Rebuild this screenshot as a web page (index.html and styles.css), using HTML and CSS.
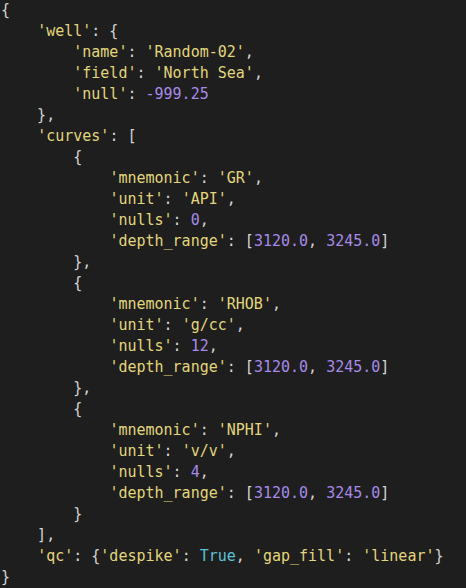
FILE: index.html
```html
<!DOCTYPE html>
<html>
<head>
<meta charset="utf-8">
<link rel="stylesheet" href="styles.css">
</head>
<body>
<pre class="code">{
    <span class="s">'well'</span>: {
        <span class="s">'name'</span>: <span class="s">'Random-02'</span>,
        <span class="s">'field'</span>: <span class="s">'North Sea'</span>,
        <span class="s">'null'</span>: <span class="n">-999.25</span>
    },
    <span class="s">'curves'</span>: [
        {
            <span class="s">'mnemonic'</span>: <span class="s">'GR'</span>,
            <span class="s">'unit'</span>: <span class="s">'API'</span>,
            <span class="s">'nulls'</span>: <span class="n">0</span>,
            <span class="s">'depth_range'</span>: [<span class="n">3120.0</span>, <span class="n">3245.0</span>]
        },
        {
            <span class="s">'mnemonic'</span>: <span class="s">'RHOB'</span>,
            <span class="s">'unit'</span>: <span class="s">'g/cc'</span>,
            <span class="s">'nulls'</span>: <span class="n">12</span>,
            <span class="s">'depth_range'</span>: [<span class="n">3120.0</span>, <span class="n">3245.0</span>]
        },
        {
            <span class="s">'mnemonic'</span>: <span class="s">'NPHI'</span>,
            <span class="s">'unit'</span>: <span class="s">'v/v'</span>,
            <span class="s">'nulls'</span>: <span class="n">4</span>,
            <span class="s">'depth_range'</span>: [<span class="n">3120.0</span>, <span class="n">3245.0</span>]
        }
    ],
    <span class="s">'qc'</span>: {<span class="s">'despike'</span>: <span class="k">True</span>, <span class="s">'gap_fill'</span>: <span class="s">'linear'</span>}
}</pre>
</body>
</html>
```
FILE: styles.css
```css
html, body {
  margin: 0;
  padding: 0;
  background: #1e1e1e;
}
.code {
  margin: 0;
  padding: 0 0 0 1px;
  font-family: "DejaVu Sans Mono", "Liberation Mono", monospace;
  font-size: 15px;
  line-height: 21px;
  color: #d4d4d4;
  white-space: pre;
}
.s { color: #e2d67c; }
.n { color: #a68ae8; }
.k { color: #5cc2d6; }
```
